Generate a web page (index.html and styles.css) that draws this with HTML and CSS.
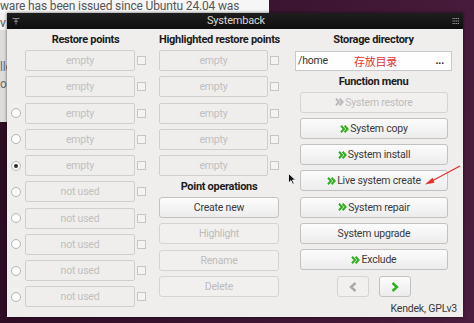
FILE: index.html
```html
<!DOCTYPE html>
<html lang="en">
  <head>
    <meta charset="UTF-8" />
    <meta name="viewport" content="width=device-width, initial-scale=1.0"/>
    <title>Systemback</title>
    <link rel="stylesheet" href="styles.css">
  </head>
  <body>
    <div class="desktop">
      <!-- window lying behind systemback -->
      <div class="bg-window">
        <div class="bg-text">ware has been issued since Ubuntu 24.04 was</div>
        <div class="bg-text second">v</div>
        <div class="bg-side">
          <span>llo</span>
          <span>o</span>
        </div>
      </div>

      <div class="window">
        <div class="titlebar">
          <svg class="tb-icon" viewBox="0 0 8 8" width="8" height="8">
            <path d="M0.5 1.5H7.5M4 1.5V7.5M2 4.2H6" stroke="#8a8a8a" stroke-width="1" fill="none"/>
          </svg>
          <span class="title">Systemback</span>
          <svg class="tb-icon" viewBox="0 0 8 8" width="8" height="8">
            <path d="M0.5 1.5H7.5M0.5 4H7.5M0.5 6.5H7.5" stroke="#9a9a9a" stroke-width="1" stroke-dasharray="1.2 0.6" fill="none"/>
          </svg>
        </div>

        <div class="wbody">
          <!-- restore points -->
          <section class="col col-points">
            <h3 class="heading indent">Restore points</h3>
            <div class="rows">
              <div class="point-row"><span class="radio-slot"></span><div class="field">empty</div><span class="check"></span></div>
              <div class="point-row"><span class="radio-slot"></span><div class="field">empty</div><span class="check"></span></div>
              <div class="point-row"><span class="radio-slot"><span class="radio"></span></span><div class="field">empty</div><span class="check"></span></div>
              <div class="point-row"><span class="radio-slot"><span class="radio"></span></span><div class="field">empty</div><span class="check"></span></div>
              <div class="point-row"><span class="radio-slot"><span class="radio on"></span></span><div class="field">empty</div><span class="check"></span></div>
              <div class="point-row"><span class="radio-slot"><span class="radio"></span></span><div class="field">not used</div><span class="check"></span></div>
              <div class="point-row"><span class="radio-slot"><span class="radio"></span></span><div class="field">not used</div><span class="check"></span></div>
              <div class="point-row"><span class="radio-slot"><span class="radio"></span></span><div class="field">not used</div><span class="check"></span></div>
              <div class="point-row"><span class="radio-slot"><span class="radio"></span></span><div class="field">not used</div><span class="check"></span></div>
              <div class="point-row"><span class="radio-slot"><span class="radio"></span></span><div class="field">not used</div><span class="check"></span></div>
            </div>
          </section>

          <!-- highlighted points + operations -->
          <section class="col col-highlight">
            <h3 class="heading">Highlighted restore points</h3>
            <div class="rows">
              <div class="point-row"><div class="field">empty</div><span class="check"></span></div>
              <div class="point-row"><div class="field">empty</div><span class="check"></span></div>
              <div class="point-row"><div class="field">empty</div><span class="check"></span></div>
              <div class="point-row"><div class="field">empty</div><span class="check"></span></div>
              <div class="point-row"><div class="field">empty</div><span class="check"></span></div>
            </div>
            <h3 class="heading ops-heading">Point operations</h3>
            <div class="buttons">
              <div class="btn">Create new</div>
              <div class="btn off">Highlight</div>
              <div class="btn off">Rename</div>
              <div class="btn off">Delete</div>
            </div>
          </section>

          <!-- storage + function menu -->
          <section class="col col-functions">
            <h3 class="heading">Storage directory</h3>
            <div class="dir-input">
              <span class="path">/home</span>
              <span class="note">存放目录</span>
              <span class="dots">...</span>
            </div>
            <h3 class="heading menu-heading">Function menu</h3>
            <div class="buttons menu">
              <div class="btn off"><svg class="chev" viewBox="0 0 9 8"><path d="M1 0.8L4 4L1 7.2M4.6 0.8L7.6 4L4.6 7.2"/></svg>System restore</div>
              <div class="btn"><svg class="chev" viewBox="0 0 9 8"><path d="M1 0.8L4 4L1 7.2M4.6 0.8L7.6 4L4.6 7.2"/></svg>System copy</div>
              <div class="btn"><svg class="chev" viewBox="0 0 9 8"><path d="M1 0.8L4 4L1 7.2M4.6 0.8L7.6 4L4.6 7.2"/></svg>System install</div>
              <div class="btn"><svg class="chev" viewBox="0 0 9 8"><path d="M1 0.8L4 4L1 7.2M4.6 0.8L7.6 4L4.6 7.2"/></svg>Live system create</div>
              <div class="btn"><svg class="chev" viewBox="0 0 9 8"><path d="M1 0.8L4 4L1 7.2M4.6 0.8L7.6 4L4.6 7.2"/></svg>System repair</div>
              <div class="btn">System upgrade</div>
              <div class="btn"><svg class="chev" viewBox="0 0 9 8"><path d="M1 0.8L4 4L1 7.2M4.6 0.8L7.6 4L4.6 7.2"/></svg>Exclude</div>
            </div>
            <div class="pager">
              <div class="btn nav off"><svg viewBox="0 0 8 10" width="8" height="10"><path d="M6.5 1L2 5L6.5 9" stroke="#a9a9a9" stroke-width="2.4" fill="none"/></svg></div>
              <div class="btn nav"><svg viewBox="0 0 8 10" width="8" height="10"><path d="M1.5 1L6 5L1.5 9" stroke="#2fae1f" stroke-width="2.4" fill="none"/></svg></div>
            </div>
            <div class="credit">Kendek, GPLv3</div>
          </section>
        </div>
      </div>

      <!-- red annotation arrow -->
      <svg class="annot" viewBox="0 0 40 24" width="40" height="24">
        <path d="M37 2L8 17.5" stroke="#e2312b" stroke-width="1.3" fill="none"/>
        <path d="M2 20.5L9.5 13.8L11.5 18.8Z" fill="#e2312b"/>
      </svg>

      <!-- mouse pointer -->
      <svg class="cursor" viewBox="0 0 8 12" width="8" height="12">
        <path d="M0.5 0.5V10L3 7.6L4.7 11.3L6.2 10.6L4.5 7H7.6Z" fill="#111" stroke="#fff" stroke-width="0.8"/>
      </svg>
    </div>
  </body>
</html>
```

FILE: styles.css
```css
* {
  box-sizing: border-box;
}
body {
  margin: 0;
  font-family: Roboto, "DejaVu Sans", sans-serif;
  font-size: 10.5px;
  letter-spacing: -0.2px;
  color: #3c3c3c;
}
.desktop {
  position: relative;
  width: 474px;
  height: 323px;
  overflow: hidden;
  background: linear-gradient(100deg, #2c0c22 0%, #3a1430 50%, #4b1d3e 100%);
}

/* background window */
.bg-window {
  position: absolute;
  left: 0;
  top: 0;
  width: 269px;
  height: 122px;
  background: #dedcdb;
}
.bg-text {
  height: 13px;
  background: #f6f6f6;
  color: #565656;
  font-size: 12px;
  letter-spacing: -0.15px;
  line-height: 12px;
  white-space: nowrap;
}
.bg-text.second {
  height: 17px;
  line-height: 20px;
  background: #f1f1f1;
}
.bg-side {
  display: flex;
  flex-direction: column;
  gap: 4px;
  padding-top: 31px;
  color: #6a6a6a;
  font-size: 12px;
  line-height: 13px;
}

/* systemback window */
.window {
  position: absolute;
  left: 7px;
  top: 13px;
  width: 456px;
  box-shadow: 0 0 3px rgba(0, 0, 0, 0.6);
}
.titlebar {
  height: 16px;
  background: linear-gradient(#1e1e1e, #0e0e0e);
  display: flex;
  align-items: center;
  justify-content: space-between;
  padding: 0 3px 0 5px;
}
.title {
  color: #dcd8d2;
  font-size: 11px;
  line-height: 16px;
}
.tb-icon {
  display: block;
}
.wbody {
  height: 288px;
  background: #efeeed;
  display: flex;
  padding: 3px 11px 0 4px;
}
.col {
  display: flex;
  flex-direction: column;
}
.col-points {
  width: 135px;
}
.col-highlight {
  width: 120px;
  margin-left: 13px;
}
.col-functions {
  width: 157px;
  margin-left: 16px;
}
.heading {
  margin: 0 0 2px;
  height: 16px;
  line-height: 16px;
  font-size: 11px;
  font-weight: 700;
  letter-spacing: -0.3px;
  color: #1c1c1c;
  text-align: center;
  white-space: nowrap;
}
.heading.indent {
  margin-left: 14px;
}
.rows {
  display: flex;
  flex-direction: column;
  gap: 5.25px;
}
.point-row {
  display: flex;
  align-items: center;
  height: 21px;
}
.radio-slot {
  width: 14px;
  flex: none;
  display: flex;
}
.radio {
  width: 10px;
  height: 10px;
  border-radius: 50%;
  border: 1px solid #b4b4b4;
  background: #fdfdfd;
  display: flex;
  align-items: center;
  justify-content: center;
}
.radio.on::after {
  content: "";
  width: 4px;
  height: 4px;
  border-radius: 50%;
  background: #2a2a2a;
}
.field {
  width: 110px;
  height: 21px;
  border: 1px solid #cfcfcf;
  border-radius: 2px;
  background: #efeeed;
  color: #c0c0c0;
  display: flex;
  align-items: center;
  justify-content: center;
}
.col-highlight .field {
  width: 109px;
}
.check {
  width: 9px;
  height: 9px;
  margin-left: 2px;
  border: 1px solid #c6c6c6;
  background: #f3f3f3;
}
.ops-heading {
  margin-top: 3px;
}
.buttons {
  display: flex;
  flex-direction: column;
  gap: 5.3px;
}
.btn {
  height: 21px;
  border: 1px solid #c2c2c2;
  border-radius: 3px;
  background: linear-gradient(#fcfcfc, #ececec);
  color: #3a3a3a;
  display: flex;
  align-items: center;
  justify-content: center;
  gap: 1px;
}
.btn.off {
  color: #bcbcbc;
  border-color: #d4d4d4;
  background: #f1f0ef;
}
.chev {
  width: 9px;
  height: 8px;
  fill: none;
  stroke: #2fae1f;
  stroke-width: 2;
}
.btn.off .chev {
  stroke: #b9b9b9;
}

/* storage directory */
.dir-input {
  height: 20px;
  margin: 1px 0 0;
  border: 1px solid #c9c9c9;
  background: #fefefe;
  display: flex;
  align-items: center;
  padding: 0 7px 0 2px;
}
.path {
  color: #333;
}
.note {
  margin-left: 26px;
  color: #e3342c;
  font-family: "Noto Sans CJK SC", sans-serif;
  font-size: 11px;
}
.dots {
  margin-left: auto;
  font-weight: 700;
  color: #222;
  line-height: 8px;
}
.menu-heading {
  margin-top: 3px;
}
.menu {
  margin: 0 4px 0 5px;
  gap: 5.2px;
}
.pager {
  display: flex;
  justify-content: center;
  gap: 10px;
  margin-top: 6px;
}
.btn.nav {
  width: 32px;
}
.credit {
  margin: 4px -5px 0 0;
  line-height: 16px;
  text-align: right;
  color: #3a3a3a;
}

/* overlays */
.annot {
  position: absolute;
  left: 423px;
  top: 164px;
}
.cursor {
  position: absolute;
  left: 288px;
  top: 173px;
}
```
